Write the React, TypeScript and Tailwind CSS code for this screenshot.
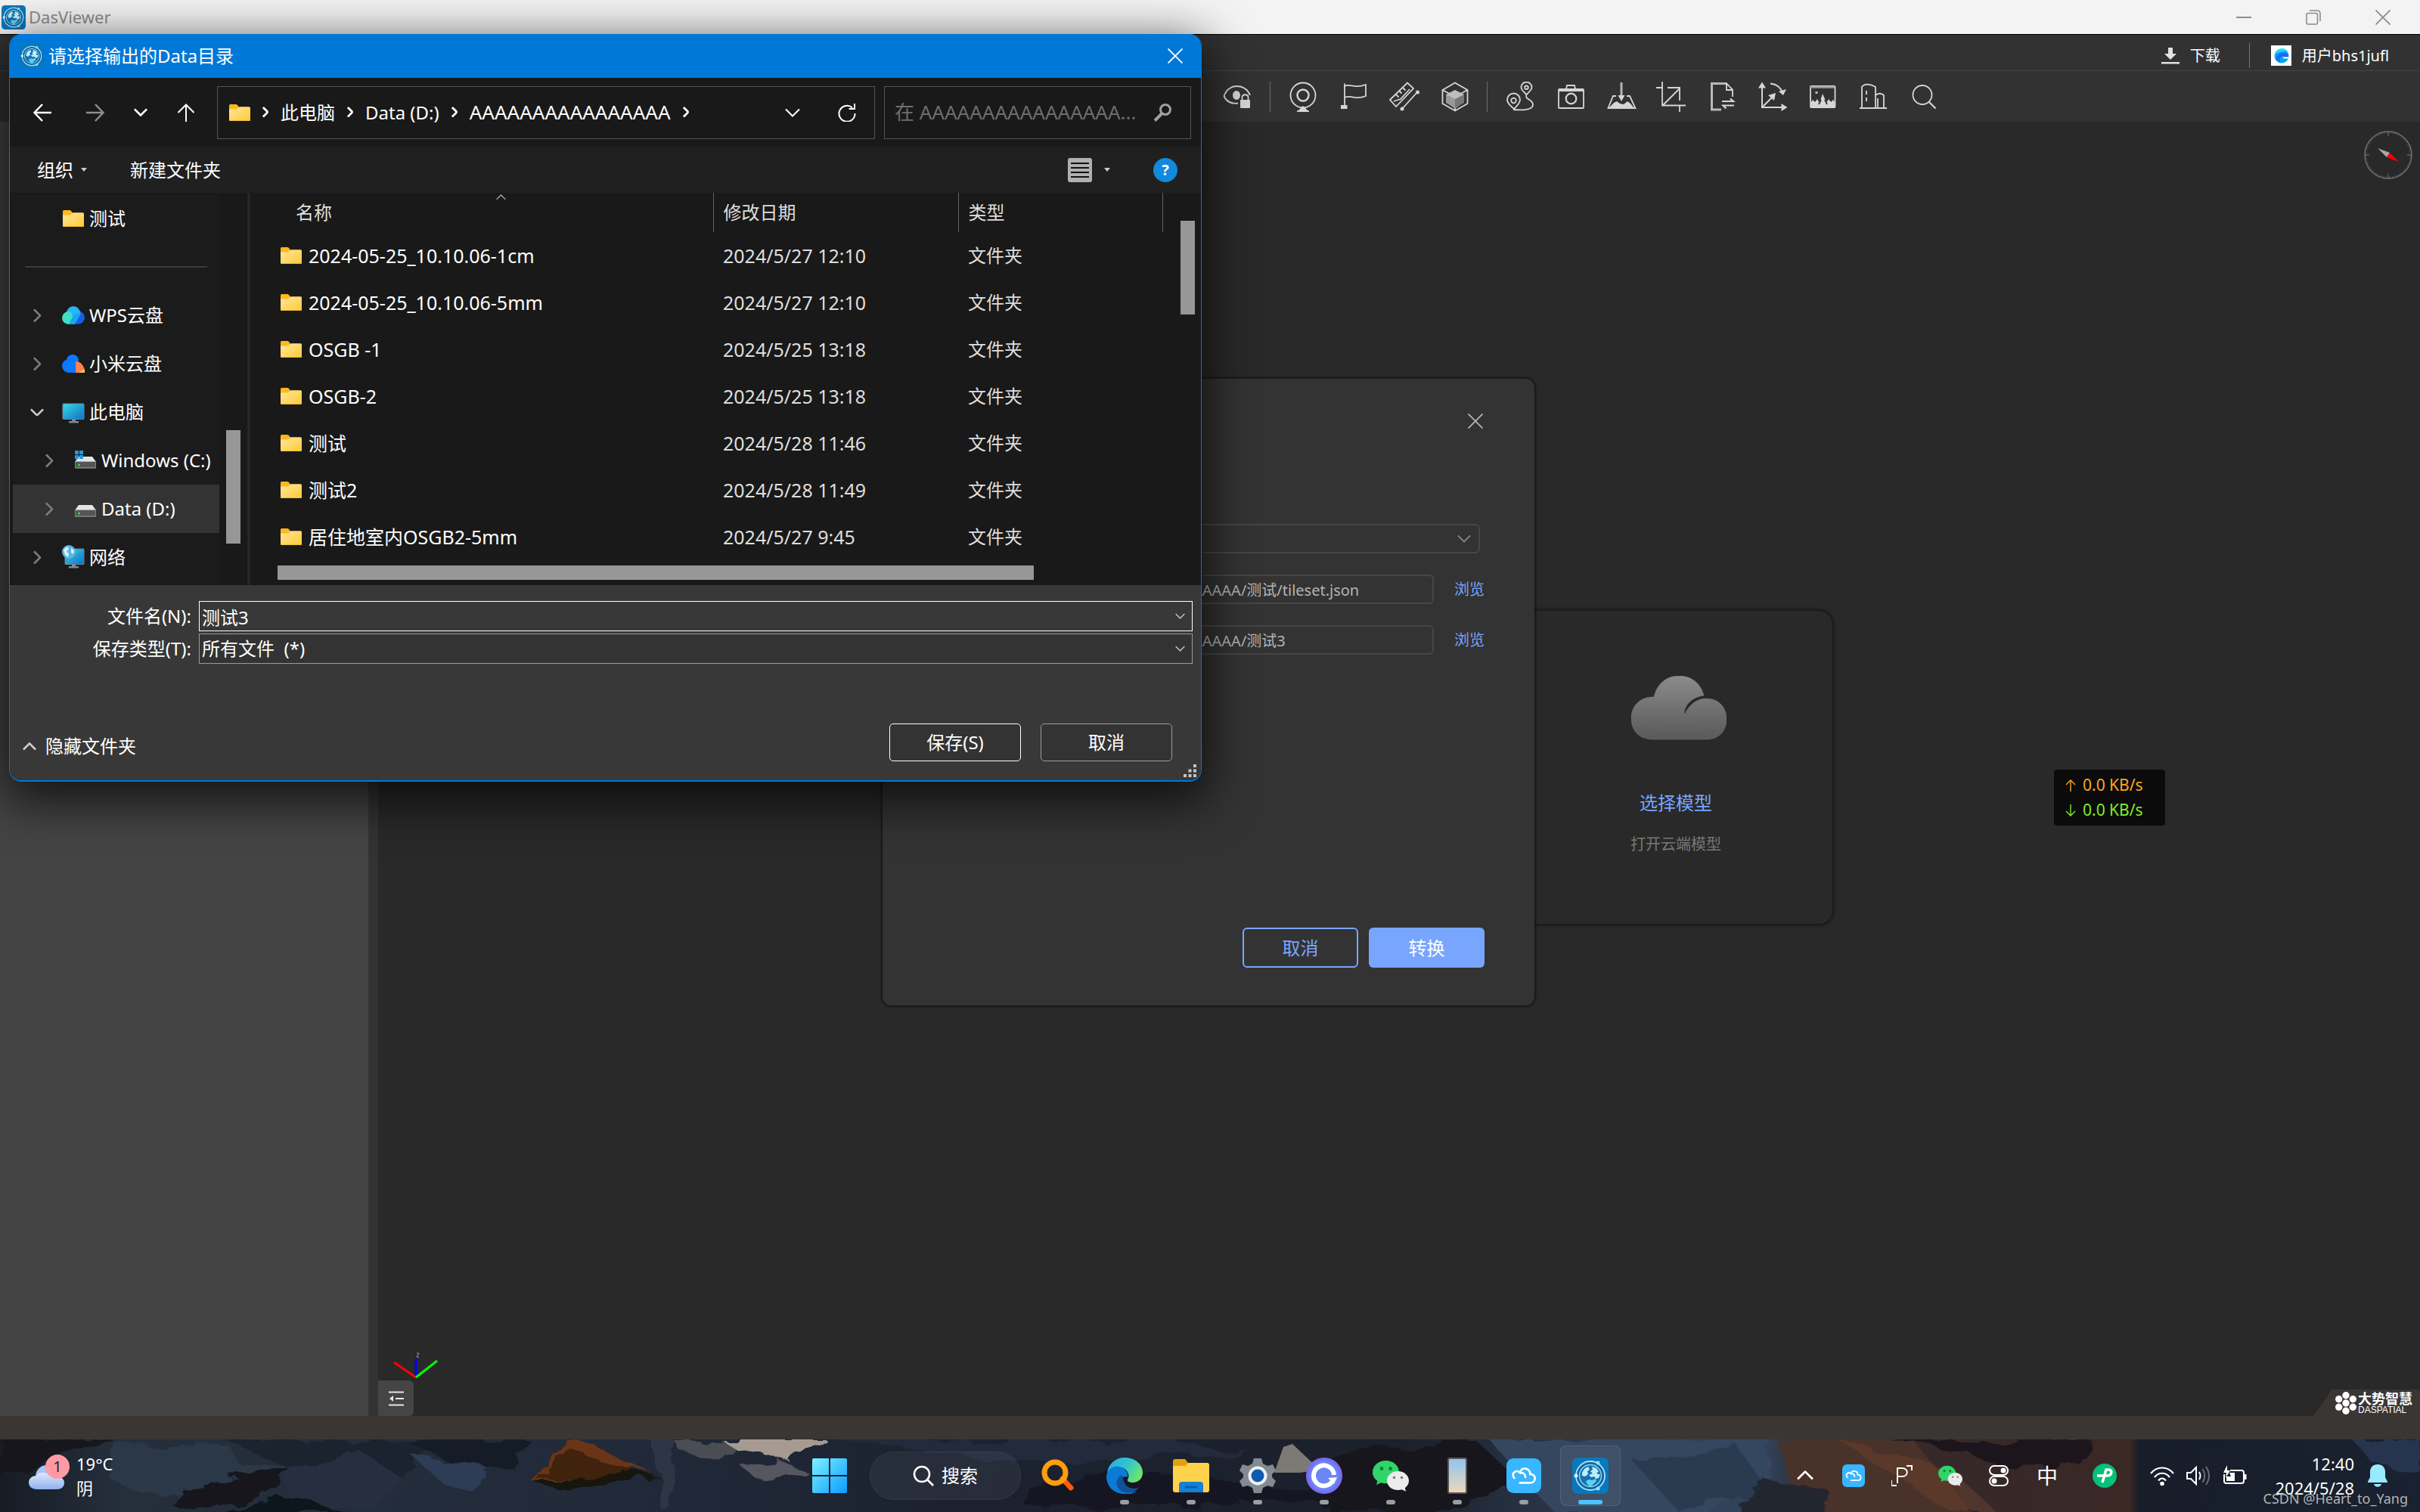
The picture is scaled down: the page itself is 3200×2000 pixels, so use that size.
import { FC, ReactNode } from "react"

type IconProps = { className?: string }

type TreeItem = {
    label: string
    icon: ReactNode
    level: number
    arrow?: "closed" | "open"
    selected?: boolean
}

const files = [
    { name: "2024-05-25_10.10.06-1cm", date: "2024/5/27 12:10" },
    { name: "2024-05-25_10.10.06-5mm", date: "2024/5/27 12:10" },
    { name: "OSGB -1", date: "2024/5/25 13:18" },
    { name: "OSGB-2", date: "2024/5/25 13:18" },
    { name: "测试", date: "2024/5/28 11:46" },
    { name: "测试2", date: "2024/5/28 11:49" },
    { name: "居住地室内OSGB2-5mm", date: "2024/5/27 9:45" },
]

/* ---------- shared icons ---------- */

const Chevron: FC<IconProps> = ({ className = "w-5" }) => (
    <svg viewBox="0 0 20 12" className={className} fill="none" stroke="currentColor" strokeWidth="2">
        <path d="M1 1.500 L10 10.500 L19 1.500" />
    </svg>
)

const Cross: FC<IconProps> = ({ className = "w-5" }) => (
    <svg viewBox="0 0 20 20" className={className} fill="none" stroke="currentColor" strokeWidth="1.800">
        <path d="M.5.5l19 19M19.500.5l-19 19" />
    </svg>
)

const Folder: FC<IconProps> = ({ className = "w-7" }) => (
    <svg viewBox="0 0 28 22" className={className}>
        <defs>
            <linearGradient id="folder" x1="0" y1="0" x2="1" y2="1">
                <stop offset="0" stopColor="#ffe79c" />
                <stop offset="1" stopColor="#ffc937" />
            </linearGradient>
        </defs>
        <path d="M0 1.500Q0 0 1.500 0h7.500q1 0 1.700.8L13 3.500 10 8H0z" fill="#ffb81c" />
        <path d="M0 6.500h9q1.200 0 2-1l1.500-1.500q.8-.7 1.800-.7H26.500Q28 3.300 28 4.800V20.500q0 1.500-1.500 1.500h-25Q0 22 0 20.500z" fill="url(#folder)" />
        <path d="M0 20.500q0 1.500 1.500 1.500h25q1.500 0 1.500-1.500" fill="none" stroke="#e8a820" />
    </svg>
)

const DasLogo: FC<IconProps> = ({ className = "w-8" }) => (
    <svg viewBox="0 0 48 48" className={className}>
        <rect width="48" height="48" rx="7" fill="#0878bd" />
        <circle cx="24" cy="24" r="19" fill="#1263a0" stroke="#a9e4f7" strokeWidth="1.800" />
        <circle cx="24" cy="24" r="14.500" fill="#1672b5" stroke="#8bd6f0" strokeWidth="1.500" />
        <path d="M13 20l3-5 5-3 2 4-3 2 1 4-4 3-4-1zM26 12l6 2 3 5-3 1 2 2h3l-2 5-4 1-2-3-4 1-3-3 5-2-3-3 3-2z" fill="#bdeffa" />
        <path d="M18 31l4-2 4 1 5-2 1 3-4 4-4 4-5-5z" fill="#5fd0ee" />
        <circle cx="5" cy="24" r="2.500" fill="#d6f7ff" />
        <circle cx="34" cy="7" r="2.500" fill="#8fe5ee" />
        <circle cx="34" cy="41" r="2.500" fill="#8fe5ee" />
    </svg>
)

const WeChat: FC<IconProps> = ({ className = "w-12" }) => (
    <svg viewBox="0 0 48 48" className={className}>
        <path d="M17.500 4C7.800 4 0 10.800 0 19.200c0 4.800 2.500 9 6.400 11.700L5 36l6.200-2.800c2 .6 4.100 1 6.300 1C27.200 34.200 35 27.500 35 19.200S27.200 4 17.500 4z" fill="#2fd566" />
        <ellipse cx="12" cy="14.500" rx="2.300" ry="2.500" fill="#157a3c" />
        <ellipse cx="23.500" cy="14.500" rx="2.300" ry="2.500" fill="#157a3c" />
        <path d="M33.500 18C25.400 18 19 23.500 19 30.500S25.400 43 33.500 43c1.800 0 3.500-.3 5-.8l5.500 2.600-1.200-4.600c3.200-2.300 5.200-5.700 5.200-9.700C48 23.500 41.600 18 33.500 18z" fill="#ececec" />
        <circle cx="28.500" cy="26.500" r="1.800" fill="#7a7a7a" />
        <circle cx="38.500" cy="26.500" r="1.800" fill="#7a7a7a" />
    </svg>
)

const CloudApp: FC<IconProps> = ({ className = "w-11" }) => (
    <svg viewBox="0 0 44 44" className={className}>
        <rect width="44" height="44" rx="9" fill="#38b6ff" />
        <path d="M17 31h13c8 0 8-11 0-11 0-8-11-10-13-2-5-5-12 2-7 7m8-7c4 0 6 3 6 6" fill="none" stroke="#fff" strokeWidth="2.600" strokeLinecap="round" />
    </svg>
)

/* ---------- app toolbar icons, all on a 40 grid ---------- */

const Tool: FC<{ label: string; children: ReactNode }> = ({ label, children }) => (
    <button aria-label={label} className="flex h-10 items-center justify-center text-[#d6d6d6]">
        <svg viewBox="0 0 40 40" className="h-10 w-10" fill="none" stroke="currentColor" strokeWidth="1.800">
            {children}
        </svg>
    </button>
)

const EyeLock = () => (
    <Tool label="view lock">
        <path d="M21 28.500C12 30 5 25 2.500 19 6 10 13 6 20 6s14 4 17 12" />
        <path d="M2.500 19c2 6 7 9 12 10" />
        <ellipse cx="19" cy="18" rx="5" ry="6" fill="currentColor" stroke="none" />
        <rect x="24" y="24" width="13" height="11" rx="1" fill="currentColor" stroke="none" />
        <path d="M26.500 24v-3c0-5 8-5 8 0v3" />
    </Tool>
)

const viewTools = [
    <Tool key="cam" label="panorama">
        <circle cx="20" cy="18" r="16.500" />
        <circle cx="20" cy="18" r="7.500" strokeWidth="2.400" />
        <path d="M20 32l7 7H13z" fill="currentColor" stroke="none" />
        <path d="M12 39.200h16" />
    </Tool>,
    <Tool key="flag" label="mark">
        <path d="M8 2.500v32M8 6c8-4 12 4 28-2v15c-14 6-18-2-28 2" />
        <rect x="3" y="31" width="8.500" height="5" fill="currentColor" stroke="none" />
    </Tool>,
    <Tool key="ruler" label="measure">
        <path d="M1 24L24 1.500 32 9 9 33z" />
        <path d="M9 17l3.500 3.500M13.500 12.500l3 3M18 8l3.500 3.500M6 26l9-3 12-13" />
        <path d="M17 36L37 14" />
        <circle cx="17" cy="36" r="2.500" fill="currentColor" stroke="none" />
        <circle cx="37.500" cy="14" r="2.500" fill="currentColor" stroke="none" />
    </Tool>,
    <Tool key="cube" label="clip box">
        <path d="M20 1.500L36.500 11v18L20 38.500 3.500 29V11z" />
        <path d="M3.500 11L20 20l16.500-9M20 20v18" />
        <path d="M8 17l12-6 12 6v9l-12 10L8 26z" fill="#bdbdbd" stroke="none" />
        <path d="M20 23v12l12-7V17z" fill="#777" stroke="none" />
        <path d="M8 17l12 6v12L8 28z" fill="#999" stroke="none" />
    </Tool>,
]

const dataTools = [
    <Tool key="route" label="route">
        <path d="M12 36c-5-4-9-7.500-9-12a8.500 8.500 0 0 1 17 0c0 4.500-4 8-8 12z" />
        <circle cx="11.500" cy="25" r="3.300" />
        <path d="M28.500 17c-4-4-7-6-7-9.500a7 7 0 0 1 14 0c0 3.500-3 5.500-7 9.500z" />
        <circle cx="28.500" cy="7.800" r="2.300" />
        <path d="M28.500 17c-3 7 8.500 6 8.500 13.500C37 38 22 38 11 37" />
    </Tool>,
    <Tool key="shot" label="screenshot">
        <rect x="4" y="10" width="33" height="25" rx="1" />
        <path d="M4 12h33" />
        <path d="M14 10l1-5h10l1 5" />
        <circle cx="20.500" cy="22.500" r="6.800" strokeWidth="2.200" />
    </Tool>,
    <Tool key="import" label="import">
        <path d="M20 1v19" strokeWidth="3" stroke="#b5b5b5" />
        <path d="M15.500 18h9L20 26z" fill="currentColor" stroke="none" />
        <path d="M13 19H9L2.500 35h36L31 19h-4" />
        <path d="M4 34l6-6 4-2 4 3 5 1 5-4 4 3 4 5z" fill="currentColor" stroke="none" />
    </Tool>,
    <Tool key="crop" label="crop">
        <path d="M8 0v31.500h31M0 8h8M15 8h16v17M31 32v8M9 31L31 9" />
    </Tool>,
    <Tool key="file" label="convert">
        <path d="M19 37H6.500V2.500H26" stroke="#b9b9b9" strokeWidth="3" />
        <path d="M25 1.500l9 9V20M26 3v8h7" />
        <path d="M20 26h15l-4-3.500M36 31.500H21.500l4 4" strokeWidth="2.200" />
    </Tool>,
    <Tool key="axes" label="transform">
        <path d="M6 6v28h28M6 34l14-14M17 2.500c9 1 14 6 16 12" strokeWidth="2" />
        <path d="M6 .5l5 8H1zM39.500 34l-8 5v-10zM24 15l-2 10-8-7zM34 18l-6-5 10-3z" fill="currentColor" stroke="none" />
    </Tool>,
    <Tool key="image" label="image">
        <rect x="4" y="6" width="32.500" height="28" rx="1" />
        <path d="M4 7.500h32" stroke="#999" strokeWidth="2.500" />
        <path d="M5 27l2-3 3 3 3-4 2 4 2-2 3-9 4 9 2 2 2-4 3 4 3-3 2 3v7H5z" fill="currentColor" stroke="none" />
        <path d="M15 30l3-6M26 30l-3-6" stroke="#333" />
        <path d="M10.500 14.500h3" strokeWidth="2.500" />
    </Tool>,
    <Tool key="building" label="building">
        <path d="M2 35h36M5 35V7c3-5 12-4 18 0v28M23 18c3-3 8-3 11 0v17M26 22v13" />
        <path d="M11 12v5M11 21v5" />
    </Tool>,
    <Tool key="search" label="search">
        <circle cx="18" cy="17.500" r="12.500" />
        <path d="M27 27l8.500 8.500" strokeWidth="2.200" />
    </Tool>,
]

/* ---------- tree icons ---------- */

const Drive: FC<{ system?: boolean }> = ({ system }) => (
    <svg viewBox="0 0 28 28" className="w-7">
        <path d="M5 9h18l5 7H0z" fill="#e4e4e8" />
        <rect y="15.500" width="28" height="8.500" rx="1" fill="#555" stroke="#aaa" strokeWidth="1" />
        <circle cx="5.500" cy="20" r="1.500" fill="#3be03b" />
        {system && <path d="M0 1h5v5H0zM6 1h5v5H6zM0 7h5v5H0zM6 7h5v5H6z" fill="#1f9be6" />}
    </svg>
)

const Monitor: FC<{ globe?: boolean }> = ({ globe }) => (
    <svg viewBox="0 0 30 32" className="-mx-px w-[30px]">
        <defs>
            <linearGradient id="screen" x1="0" y1="0" x2="1" y2="1">
                <stop offset="0" stopColor="#38dbe6" />
                <stop offset="1" stopColor="#0f6fc4" />
            </linearGradient>
        </defs>
        <path d="M13 25h5v3h4v2.500H9V28h4z" fill="#7b8894" />
        <rect x={globe ? 4 : 1} y="5" width={globe ? 25 : 28} height="20.500" rx="1" fill="url(#screen)" stroke="#6c8796" strokeWidth="1" />
        {globe && <circle cx="9" cy="9" r="9" fill="#5cb6df" />}
        {globe && <path d="M2 6l5-4 2 3-3 4 3 2-1 5-4-3zM12 4l4 3-1 5-3-2z" fill="#d9f1f8" />}
    </svg>
)

const WpsCloud = () => (
    <svg viewBox="0 0 30 24" className="-mx-px w-[30px]">
        <circle cx="21" cy="15" r="9" fill="#1560e0" />
        <circle cx="15" cy="9" r="9" fill="#29b3f8" />
        <path d="M9 7a9 8.500 0 0 0 0 17h8L12 8z" fill="#3fe0c4" />
        <path d="M9 24h8l8-14c-5-2-9 0-12 6z" fill="#19a5f0" />
    </svg>
)

const MiCloud = () => (
    <svg viewBox="0 0 30 24" className="-mx-px w-[30px]">
        <circle cx="14" cy="8" r="8" fill="#0a78ff" />
        <circle cx="9" cy="15" r="9" fill="#0a78ff" />
        <rect x="8" y="10" width="10" height="14" fill="#0a78ff" />
        <path d="M18 9c7 0 12 6 12 15H18z" fill="#ff8050" />
        <path d="M22 24l8-5v5z" fill="#ffc64d" />
    </svg>
)

const tree: TreeItem[] = [
    { label: "WPS云盘", icon: <WpsCloud />, level: 0, arrow: "closed" },
    { label: "小米云盘", icon: <MiCloud />, level: 0, arrow: "closed" },
    { label: "此电脑", icon: <Monitor />, level: 0, arrow: "open" },
    { label: "Windows (C:)", icon: <Drive system />, level: 1, arrow: "closed" },
    { label: "Data (D:)", icon: <Drive />, level: 1, arrow: "closed", selected: true },
    { label: "网络", icon: <Monitor globe />, level: 0, arrow: "closed" },
]

const TreeRow: FC<{ item: TreeItem }> = ({ item }) => (
    <li className={`flex h-16 items-center whitespace-nowrap ${item.level ? "pl-[42px]" : "pl-[26px]"} ${item.selected ? "bg-[#333]" : ""}`}>
        <span className="flex w-3 justify-center">
            {item.arrow === "closed" && <Chevron className="w-[18px] shrink-0 -rotate-90 stroke-3 text-[#7a7a7a]" />}
            {item.arrow === "open" && <Chevron className="w-[18px] shrink-0 stroke-3 text-[#c8c8c8]" />}
        </span>
        <span className="ml-7 flex w-7 justify-center">{item.icon}</span>
        <span className="ml-[7px]">{item.label}</span>
    </li>
)

const Crumb = () => <Chevron className="-mx-0.5 w-3.5 shrink-0 -rotate-90 stroke-4 text-white" />

/* ---------- save dialog ---------- */

const SaveDialog: FC = () => (
    <section className="absolute left-3 top-[45px] w-[1577px] overflow-hidden rounded-2xl border-x border-b-2 border-[#0078d7] bg-[#191919] text-2xl text-white shadow-[0_18px_64px_8px_rgba(0,0,0,0.7)]">
        <header className="flex h-[58px] items-center bg-[#0078d7] pl-[13px] pr-6">
            <DasLogo />
            <h2 className="ml-1.5">请选择输出的Data目录</h2>
            <button aria-label="关闭" className="ml-auto"><Cross /></button>
        </header>

        <div className="flex h-[91px] items-center pl-2 pr-[13px]">
            <button aria-label="back" className="flex w-[70px] justify-center">
                <svg viewBox="0 0 24 24" className="w-6" fill="none" stroke="currentColor" strokeWidth="2.500"><path d="M24 12H2M12 1L1.500 12 12 23" /></svg>
            </button>
            <button aria-label="forward" className="flex w-[70px] justify-center text-[#8e8e8e]">
                <svg viewBox="0 0 24 24" className="w-6" fill="none" stroke="currentColor" strokeWidth="2.500"><path d="M0 12h22M12 1l10.500 11L12 23" /></svg>
            </button>
            <button aria-label="recent" className="flex w-[50px] justify-center"><Chevron className="w-[18px] stroke-3" /></button>
            <button aria-label="up" className="flex w-[70px] justify-center">
                <svg viewBox="0 0 24 24" className="w-6" fill="none" stroke="currentColor" strokeWidth="2"><path d="M12 24V2M1.500 12L12 1.500 22.500 12" /></svg>
            </button>

            <div className="ml-1.5 flex h-[70px] flex-1 items-center gap-[15px] border border-[#535353] pl-[15px] pr-6">
                <Folder />
                <Crumb />
                <span>此电脑</span>
                <Crumb />
                <span>Data (D:)</span>
                <Crumb />
                <span className="text-[26px]">AAAAAAAAAAAAAAAA</span>
                <Crumb />
                <button aria-label="history" className="ml-auto mr-[35px]"><Chevron className="w-5" /></button>
                <button aria-label="refresh">
                    <svg viewBox="0 0 24 24" className="w-6" fill="none" stroke="currentColor" strokeWidth="2"><path d="M19 5.500A10.500 10.500 0 1 0 22.500 13M22 0v7h-7.500" /></svg>
                </button>
            </div>

            <div className="ml-3 flex h-[70px] w-[406px] items-center border border-[#535353] pl-[13px] pr-6">
                <input aria-label="搜索" placeholder="在 AAAAAAAAAAAAAAAA..." className="min-w-0 flex-1 bg-transparent text-[26px] outline-none placeholder:text-[#6f6f6f]" />
                <svg viewBox="0 0 24 24" className="w-6 text-[#a0a0a0]" fill="none" stroke="currentColor">
                    <circle cx="15" cy="8" r="6.500" strokeWidth="3" />
                    <path d="M10.500 13L1 22.500" strokeWidth="4" />
                </svg>
            </div>
        </div>

        <div className="flex h-[61px] items-center bg-[#202020] pl-9 pr-[31px]">
            <button className="flex items-center gap-2.5">
                组织
                <svg viewBox="0 0 8 5" className="w-2" fill="#ccc"><path d="M0 0h8L4 5z" /></svg>
            </button>
            <button className="ml-[57px]">新建文件夹</button>
            <button aria-label="view" className="ml-auto flex items-center gap-4">
                <svg viewBox="0 0 32 32" className="w-8">
                    <rect width="32" height="32" rx="3" fill="#b0b0b0" />
                    <path d="M4 7h24M4 13h24M4 19h24M4 25h24" stroke="#111" strokeWidth="2" />
                </svg>
                <svg viewBox="0 0 8 5" className="w-2" fill="#ccc"><path d="M0 0h8L4 5z" /></svg>
            </button>
            <button aria-label="帮助" className="ml-[57px] flex h-8 w-8 items-center justify-center rounded-full bg-[#1189dd] text-xl font-bold">?</button>
        </div>

        <div className="flex h-[519px]">
            <div className="flex w-[318px] shrink-0 border-r-4 border-[#262626] pl-1 pt-0.5">
                <ul className="w-[273px] bg-[#1b1b1b]">
                    <li className="flex h-16 items-center pl-[66px]">
                        <Folder />
                        <span className="ml-[7px]">测试</span>
                    </li>
                    <li className="flex h-16 items-center px-4"><hr className="w-full border-t-2 border-[#3a3a3a]" /></li>
                    {tree.map((item) => <TreeRow key={item.label} item={item} />)}
                </ul>
                <div className="flex flex-1 items-end justify-center pb-[55px]">
                    <div className="h-[150px] w-[19px] bg-[#979797]" />
                </div>
            </div>

            <div className="relative min-w-0 flex-1 overflow-hidden">
                <table className="w-[1220px] table-fixed border-collapse text-left">
                    <colgroup>
                        <col className="w-[612px]" />
                        <col className="w-[324px]" />
                        <col className="w-[270px]" />
                        <col />
                    </colgroup>
                    <thead>
                        <tr className="h-[52px] text-[#dedede]">
                            <th className="relative border-r border-[#636363] pl-[60px] font-normal">
                                名称
                                <Chevron className="absolute left-[325px] top-0.5 w-[13px] rotate-180 text-[#aaa]" />
                            </th>
                            <th className="border-r border-[#636363] pl-[13px] font-normal">修改日期</th>
                            <th className="border-r border-[#636363] pl-[13px] font-normal">类型</th>
                            <th />
                        </tr>
                    </thead>
                    <tbody>
                        {files.map((file) => (
                            <tr key={file.name} className="h-[62px] whitespace-nowrap">
                                <td className="pl-10">
                                    <div className="flex items-center gap-[9px] text-[25px] leading-9">
                                        <Folder />
                                        {file.name}
                                    </div>
                                </td>
                                <td className="pl-[13px] text-[25px] leading-9 text-[#dedede]">{file.date}</td>
                                <td className="pl-[13px] text-[#dedede]">文件夹</td>
                                <td />
                            </tr>
                        ))}
                    </tbody>
                </table>
                <div className="absolute bottom-[7px] left-9 h-[19px] w-[1000px] bg-[#979797]" />
                <div className="absolute right-2 top-[37px] h-[124px] w-[19px] bg-[#979797]" />
            </div>
        </div>

        <div className="relative bg-[#383838] pb-[25px] pl-[17px] pr-[38px] pt-[21px]">
            <div className="-mr-[27px] grid grid-cols-[223px_1fr] items-center gap-x-2.5 gap-y-[3px]">
                <label htmlFor="filename" className="text-right">文件名(N):</label>
                <div className="relative flex items-center">
                    <input id="filename" defaultValue="测试3" className="h-10 w-full border border-white bg-transparent px-[3px] outline-none" />
                    <Chevron className="absolute right-2.5 w-[13px] text-[#ccc]" />
                </div>
                <label htmlFor="filetype" className="text-right">保存类型(T):</label>
                <div className="relative flex items-center">
                    <select id="filetype" className="h-10 w-full appearance-none border border-[#9b9b9b] bg-[#333] px-[3px] outline-none">
                        <option>所有文件&nbsp; (*)</option>
                    </select>
                    <Chevron className="absolute right-2.5 w-[13px] text-[#ccc]" />
                </div>
            </div>
            <div className="mt-[79px] flex items-start">
                <button className="mt-3.5 flex items-center gap-3">
                    <Chevron className="w-[18px] rotate-180 stroke-3 text-[#ccc]" />
                    隐藏文件夹
                </button>
                <button className="ml-auto h-[50px] w-[174px] rounded-[5px] border border-white bg-[#333]">保存(S)</button>
                <button className="ml-[26px] h-[50px] w-[174px] rounded-[5px] border border-[#9b9b9b] bg-[#333]">取消</button>
            </div>
            <svg viewBox="0 0 17 17" className="absolute bottom-1 right-1.5 w-[17px]" fill="#c4c4c4">
                <path d="M13 0h4v4h-4zM6.500 6.500h4v4h-4zM13 6.500h4v4h-4zM0 13h4v4H0zM6.500 13h4v4h-4zM13 13h4v4h-4z" />
            </svg>
        </div>
    </section>
)

/* ---------- conversion modal behind the dialog ---------- */

const ConvertModal: FC = () => (
    <section className="absolute right-[1171px] top-[501px] flex h-[829px] w-[862px] flex-col rounded-xl bg-[#333] px-[66px] pb-[50px] pt-[46px] text-xl text-[#b4b4b4] shadow-[0_0_3px_2px_rgba(0,0,0,0.45)]">
        <button aria-label="关闭" className="ml-auto mr-0.5"><Cross /></button>
        <div className="mt-[126px] flex flex-col gap-7">
            <div className="relative mr-1.5 flex items-center pl-[164px]">
                <select aria-label="转换类型" className="h-[39px] w-full appearance-none rounded-md border-2 border-[#474747] bg-transparent" />
                <Chevron className="absolute right-3 w-[18px] text-[#888]" />
            </div>
            <div className="flex items-center pl-[164px]">
                <input aria-label="输入文件" defaultValue="D:/AAAAAAAAAAAAAAAA/测试/tileset.json" className="h-[39px] min-w-0 flex-1 rounded-md border-2 border-[#474747] bg-transparent px-2.5" />
                <button className="ml-[27px] text-[#78a6ff]">浏览</button>
            </div>
            <div className="flex items-center pl-[164px]">
                <input aria-label="输出目录" defaultValue="D:/AAAAAAAAAAAAAAAA/测试3" className="h-[39px] min-w-0 flex-1 rounded-md border-2 border-[#474747] bg-transparent px-2.5" />
                <button className="ml-[27px] text-[#78a6ff]">浏览</button>
            </div>
        </div>
        <div className="mt-auto flex justify-end gap-3.5 text-2xl">
            <button className="h-[53px] w-[153px] rounded-md border-2 border-[#78a6ff] text-[#78a6ff]">取消</button>
            <button className="h-[53px] w-[153px] rounded-md bg-[#78a6ff] text-white">转换</button>
        </div>
    </section>
)

const Compass = () => (
    <svg viewBox="0 0 64 64" className="absolute right-2.5 top-3 w-16">
        <circle cx="32" cy="32" r="31" fill="none" stroke="#6f6f6f" strokeWidth="1.500" />
        <circle cx="32" cy="32" r="29.500" fill="none" stroke="#5c5c5c" strokeWidth="2" strokeDasharray="1 2.090" />
        <path d="M32 1v6M32 57v6M1 32h6M57 32h6" stroke="#777" />
        <path d="M18 23l16 6-4 6z" fill="#a8a8a8" />
        <path d="M34 29l12 12-16-6z" fill="#f00" />
    </svg>
)

const CloudCard: FC = () => (
    <button className="flex h-[418px] w-[418px] flex-col items-center rounded-[20px] border-2 border-[#1b1b1b] pt-[86px] shadow-[0_0_4px_rgba(0,0,0,0.4)]">
        <svg viewBox="0 0 126 86" className="ml-2 w-[126px]">
            <defs>
                <linearGradient id="cloud" x1="0" y1="0" x2="0" y2="1">
                    <stop offset="0" stopColor="#8b8b8b" />
                    <stop offset="1" stopColor="#595959" />
                </linearGradient>
            </defs>
            <path d="M29 84C11 84 0 73 0 56 0 39 13 27 30 28 34 11 46 0 63 0c17 0 29 10 33 26-14 2-24 10-26 22l1 3c5-13 16-21 28-21 16 0 27 11 27 27 0 17-11 27-27 27z" fill="url(#cloud)" stroke="#8a8a8a" strokeOpacity=".4" />
        </svg>
        <span className="mt-[66px] text-2xl text-[#78a6ff]">选择模型</span>
        <span className="mt-[25px] text-xl text-[#787878]">打开云端模型</span>
    </button>
)

const Brand: FC = () => (
    <div className="absolute bottom-0 right-0 flex h-[35px] items-center bg-[#3a3634] pl-[29px] pr-2.5 text-white [clip-path:polygon(24px_0,100%_0,100%_100%,0_100%,18px_10px)]">
        <svg viewBox="0 0 28 30" className="w-7" fill="#fff">
            <circle cx="14" cy="15" r="4.700" /><circle cx="14" cy="4.700" r="4.700" /><circle cx="14" cy="25.300" r="4.700" />
            <circle cx="4.700" cy="9.700" r="4.700" /><circle cx="23.300" cy="9.700" r="4.700" />
            <circle cx="4.700" cy="20.300" r="4.700" /><circle cx="23.300" cy="20.300" r="4.700" />
        </svg>
        <div className="ml-0.5 leading-none">
            <div className="text-[18px] font-bold leading-[18px]">大势智慧</div>
            <div className="font-['Liberation_Sans'] text-[12px] leading-[12px]">DASPATIAL</div>
        </div>
    </div>
)

/* ---------- taskbar ---------- */

const Wallpaper = () => (
    <svg viewBox="0 0 3200 96" preserveAspectRatio="xMidYMid slice" className="absolute inset-0 h-full w-full">
        <defs>
            <linearGradient id="wall" x1="0" x2="1">
                <stop offset="0" stopColor="#171b24" />
                <stop offset=".05" stopColor="#252f3b" />
                <stop offset=".25" stopColor="#222a3a" />
                <stop offset=".38" stopColor="#1c2230" />
                <stop offset=".58" stopColor="#1b202b" />
                <stop offset=".68" stopColor="#33425a" />
                <stop offset=".73" stopColor="#30425a" />
                <stop offset=".75" stopColor="#33292a" />
                <stop offset=".88" stopColor="#3a2825" />
                <stop offset=".884" stopColor="#171d29" />
                <stop offset="1" stopColor="#1a2130" />
            </linearGradient>
            {/* rough brush texture over the flat shapes */}
            <filter id="brush" x="0" y="0" width="1" height="1">
                <feTurbulence type="fractalNoise" baseFrequency=".018 .03" numOctaves="4" seed="7" result="noise" />
                <feDisplacementMap in="SourceGraphic" in2="noise" scale="26" />
            </filter>
        </defs>
        <rect width="3200" height="96" fill="url(#wall)" />
        <g filter="url(#brush)">
            <path d="M0 0h150L60 30 0 52z" fill="#14151b" />
            <path d="M150 4l150 0 20 32 65 0-90 32-100 8-50-24z" fill="#2b3946" />
            <path d="M300 0h280l-60 60-80-18-60-4z" fill="#1a202d" />
            <path d="M380 40l90-30 60 40-30 46-120-20z" fill="#252d40" />
            <path d="M240 66l145-26-20 24-50 20-85 6z" fill="#12161c" />
            <path d="M545 22l95 12-12 36-40-10z" fill="#2e3e54" />
            <path d="M540 4l60-4h100l-20 40-90-14z" fill="#161b26" />
            <path d="M700 52l60-44 26 0 74 34-20-4-120 14z" fill="#6b3518" />
            <path d="M706 50l54-32 80 24-30 4z" fill="#41210f" />
            <path d="M702 54l120-12 46 2-70 18-60 2z" fill="#191311" />
            <path d="M295 96l70-24 50 10 40 14z" fill="#0f141c" />
            <path d="M890 0h80l10 12-30 14-50-10z" fill="#4b4d55" />
            <path d="M955 0h138l-22 16-24 16-30-10-40-6z" fill="#a69b92" />
            <path d="M980 36l50-8 40 16-70 8z" fill="#55565f" />
            <path d="M860 0h30v96h-12z" fill="#2d3644" />
            <path d="M1360 62l200-20 260 40-460 10z" fill="#131722" />
            <path d="M1100 0h440l120 20-300 10z" fill="#222b3a" />
            <path d="M1750 20l180-20h20l54 50-90 46h-160z" fill="#14161c" />
            <path d="M1970 0h370v50l-80 50h-200l-40-40z" fill="#36475f" />
            <path d="M2160 30l140-20 40 60-120 26z" fill="#2b3a50" />
            <path d="M2350 0l180 0 80 100-200 0-40-40z" fill="#4a3029" />
            <path d="M2430 0l150 40 60 56h-60z" fill="#6a4230" opacity=".5" />
            <path d="M2500 0h270c-30 50-120 50-170 14z" fill="#1d191c" />
            <path d="M2330 50l90 20-10 30h-120z" fill="#24262d" />
            <path d="M3110 0h90v44l-60-10z" fill="#26344d" />
        </g>
        <path d="M1685 44l12-34 12-4 36 34-26 4z" fill="#7d7974" />
    </svg>
)

const TaskIcon: FC<{ children: ReactNode; label: string; state?: "open" | "active" }> = ({ children, label, state }) => (
    <button aria-label={label} className="relative flex h-24 w-[88px] items-center justify-center">
        {state === "active" && <span className="absolute h-20 w-20 rounded-lg border border-white/10 bg-white/5" />}
        <span className="relative">{children}</span>
        {state === "open" && <span className="absolute bottom-2.5 h-1.5 w-3 rounded-full bg-[#9b9da3]" />}
        {state === "active" && <span className="absolute bottom-2.5 h-1.5 w-8 rounded-full bg-[#4cc2ff]" />}
    </button>
)

const Taskbar: FC = () => (
    <footer className="relative grid h-24 shrink-0 grid-cols-[1fr_auto_1fr] overflow-hidden text-white">
        <Wallpaper />

        <button className="relative flex items-center pl-[38px] text-left text-[22px]">
            <svg viewBox="0 0 54 48" className="-mt-2 w-[54px]">
                <defs>
                    <linearGradient id="weather" x1="0" y1="0" x2="0" y2="1">
                        <stop offset="0" stopColor="#dfe8fb" />
                        <stop offset="1" stopColor="#8fb2f2" />
                    </linearGradient>
                </defs>
                <circle cx="24" cy="29" r="15" fill="#a9c2f5" />
                <path d="M11 46C4 46 0 42 0 37s4-9 10-9c3-5 13-6 17 0 8-2 20 1 20 9 0 6-4 9-10 9z" fill="url(#weather)" />
                <circle cx="38" cy="16" r="16" fill="#ff99a4" />
                <text x="38" y="23" textAnchor="middle" fontSize="20" fill="#222">1</text>
            </svg>
            <span className="ml-[9px] leading-8">19°C<br />阴</span>
        </button>

        <div className="relative flex items-center">
            <TaskIcon label="开始">
                <svg viewBox="0 0 46 46" className="w-[46px]">
                    <defs>
                        <linearGradient id="win" x1="0" y1="0" x2="1" y2="1">
                            <stop offset="0" stopColor="#7df2ff" />
                            <stop offset="1" stopColor="#0b9bff" />
                        </linearGradient>
                    </defs>
                    <path d="M2 0h20v22H0V2q0-2 2-2zM24 0h20q2 0 2 2v20H24zM0 24h22v22H2q-2 0-2-2zM24 24h22v20q0 2-2 2H24z" fill="url(#win)" />
                </svg>
            </TaskIcon>
            <button className="ml-[9px] mr-[5px] flex h-16 w-[200px] items-center justify-center gap-2.5 rounded-full border border-white/5 bg-white/5 text-2xl">
                <svg viewBox="0 0 28 28" className="w-7" fill="none" stroke="#fff" strokeWidth="2.600">
                    <circle cx="12" cy="12" r="10" /><path d="M19 19l8 8" />
                </svg>
                搜索
            </button>
            <TaskIcon label="Everything">
                <svg viewBox="0 0 44 44" className="w-11">
                    <path d="M28 26L39 38" stroke="#ff5a12" strokeWidth="7" strokeLinecap="round" />
                    <circle cx="18" cy="18" r="14" fill="none" stroke="#ff9d0a" strokeWidth="7" />
                </svg>
            </TaskIcon>
            <TaskIcon label="Edge" state="open">
                <svg viewBox="0 0 48 48" className="w-12">
                    <defs>
                        <linearGradient id="edgeTop" x1="0" y1="0" x2="1" y2=".5">
                            <stop offset="0" stopColor="#22a8e0" />
                            <stop offset=".6" stopColor="#36c6cf" />
                            <stop offset="1" stopColor="#6be36c" />
                        </linearGradient>
                    </defs>
                    <path d="M1 20C3 8 12 0 24 0c14 0 24 9 24 20 0 8-6 13-13 13-5 0-8-2-7-4 3-3 2-14-9-16C11 12 4 16 1 20z" fill="url(#edgeTop)" />
                    <path d="M0 25c1-10 9-14 16-13 9 1 13 8 12 14-7-3-12 5-7 13 4 6 12 8 19 5-5 4-11 5-16 4C10 48 0 38 0 25z" fill="#0b7bd8" />
                    <path d="M20 23c-6 3-9 12-4 18 6 8 18 8 28-2-8 4-17 1-20-5-2-4-2-9-4-11z" fill="#11519c" />
                </svg>
            </TaskIcon>
            <TaskIcon label="文件资源管理器" state="open">
                <svg viewBox="0 0 48 44" className="w-12">
                    <path d="M0 3q0-3 3-3h13l4 5v6H0z" fill="#e2a10f" />
                    <path d="M0 9h17l3-4h25q3 0 3 3v33q0 3-3 3H3q-3 0-3-3z" fill="#ffd24b" />
                    <path d="M8 44V34q0-4 4-4h24q4 0 4 4v10z" fill="#1380d4" />
                    <path d="M16 37h16" stroke="#0a5ba8" strokeWidth="2.500" />
                </svg>
            </TaskIcon>
            <TaskIcon label="设置" state="open">
                <svg viewBox="0 0 48 48" className="w-12">
                    <path d="M19 1h10l2 7 6 3 7-2 4 8-5 5v4l5 5-4 8-7-2-6 3-2 7H19l-2-7-6-3-7 2-4-8 5-5v-4l-5-5 4-8 7 2 6-3z" fill="#838b92" />
                    <circle cx="24" cy="24" r="10.500" fill="#0f5cad" stroke="#eef1f4" strokeWidth="4" />
                </svg>
            </TaskIcon>
            <TaskIcon label="浏览器" state="open">
                <svg viewBox="0 0 48 48" className="w-12">
                    <circle cx="24" cy="24" r="24" fill="#7c6cf0" />
                    <circle cx="24" cy="24" r="20" fill="#6a86f5" />
                    <path d="M35 31a13.500 13.500 0 1 1 2-8" fill="none" stroke="#fff" strokeWidth="6" />
                    <path d="M29 27l12-1-4 9z" fill="#fff" />
                </svg>
            </TaskIcon>
            <TaskIcon label="微信" state="open"><WeChat /></TaskIcon>
            <TaskIcon label="手机" state="open">
                <svg viewBox="0 0 26 48" className="w-[26px]">
                    <defs>
                        <linearGradient id="phone" x1="0" y1="0" x2="0" y2="1">
                            <stop offset="0" stopColor="#8fc3f2" />
                            <stop offset="1" stopColor="#efd9b8" />
                        </linearGradient>
                    </defs>
                    <rect x="1" y="1" width="24" height="46" rx="2" fill="url(#phone)" stroke="#5c5753" strokeWidth="2" />
                </svg>
            </TaskIcon>
            <TaskIcon label="云盘" state="open"><CloudApp className="w-[46px]" /></TaskIcon>
            <TaskIcon label="DasViewer" state="active"><DasLogo className="w-12" /></TaskIcon>
        </div>

        <div className="relative flex items-center justify-end pr-[43px]">
            <button aria-label="more" className="flex w-16 justify-center"><Chevron className="w-[22px] rotate-180 stroke-[2.500]" /></button>
            <button aria-label="cloud" className="flex w-16 justify-center"><CloudApp className="w-[30px]" /></button>
            <button aria-label="project" className="flex w-16 justify-center">
                <svg viewBox="0 0 28 28" className="w-7" fill="none" stroke="#fff" strokeWidth="2">
                    <path d="M8 24V4h6c9 0 9 11 0 11H8M20 1h7v6M0 20v7h7" />
                </svg>
            </button>
            <button aria-label="微信" className="flex w-16 justify-center"><WeChat className="w-8" /></button>
            <button aria-label="switches" className="flex w-16 justify-center">
                <svg viewBox="0 0 26 28" className="w-[26px]" fill="none" stroke="#fff" strokeWidth="2">
                    <rect x="1" y="1" width="24" height="12" rx="6" /><rect x="1" y="15" width="24" height="12" rx="6" />
                    <circle cx="19" cy="7" r="2.500" fill="#fff" /><circle cx="7" cy="21" r="2.500" fill="#fff" />
                </svg>
            </button>
            <button className="flex w-16 justify-center text-[28px]">中</button>
            <button aria-label="plus" className="ml-3 flex w-16 justify-center">
                <svg viewBox="0 0 32 32" className="w-8">
                    <circle cx="16" cy="16" r="16" fill="#06c07a" />
                    <path d="M13 25L18 8h4c5 1 3 8-2 8H6" fill="none" stroke="#fff" strokeWidth="3.500" />
                </svg>
            </button>
            <button aria-label="network" className="ml-7 flex gap-4">
                <svg viewBox="0 0 32 28" className="w-8" fill="none" stroke="#fff" strokeWidth="2.200">
                    <path d="M1 11C9 1 23 1 31 11M6 16c5-7 15-7 20 0M11 20.500c3-4 7-4 10 0" />
                    <circle cx="16" cy="24.500" r="2.800" fill="#fff" stroke="none" />
                </svg>
                <svg viewBox="0 0 32 28" className="w-8" fill="none" stroke="#fff" strokeWidth="2">
                    <path d="M1 10h5l7-7v22l-7-7H1zM17 9q3 5 0 10" />
                    <path d="M21.500 5q5.500 9 0 18M26 2q8 12 0 24" stroke="#6a6d75" />
                </svg>
                <svg viewBox="0 0 32 28" className="w-8" fill="none" stroke="#fff" strokeWidth="2">
                    <path d="M10 7h15q3 0 3 3v11q0 3-3 3H5q-3 0-3-3V12" />
                    <path d="M30 12v7" strokeWidth="3" />
                    <path d="M9 10h7v11H5v-6h6zM6 0L1 10h4l-1 7 6-10H6z" fill="#fff" stroke="none" />
                </svg>
            </button>
            <button className="ml-8 w-[110px] text-right text-[22px] leading-8">12:40<br />2024/5/28</button>
            <svg viewBox="0 0 26 30" className="ml-[18px] w-[26px]" fill="#98ebff">
                <path d="M13 0C7 0 3 4 3 10v7l-3 6v1h26v-1l-3-6v-7c0-6-4-10-10-10zM8 26h10c-1 5-9 5-10 0z" />
            </svg>
        </div>
        <span className="absolute bottom-1 right-4 text-[18px] leading-7 text-[#b4b4b4]">CSDN @Heart_to_Yang</span>
    </footer>
)

const App: FC = () => (
    <div className="relative flex h-screen flex-col overflow-hidden bg-[#292929] font-['Noto_Sans','Noto_Sans_CJK_SC',sans-serif] leading-normal">
        <header className="flex h-[46px] shrink-0 items-center border-b border-black bg-[#f3f3f3] pl-0.5 pr-[39px] text-[#8c8c8c]">
            <DasLogo />
            <h1 className="ml-1 text-[22px]">DasViewer</h1>
            <div className="ml-auto flex items-center gap-[72px]">
                <button aria-label="最小化" className="h-0.5 w-5 bg-[#8c8c8c]" />
                <button aria-label="还原">
                    <svg viewBox="0 0 20 20" className="w-5" fill="none" stroke="currentColor" strokeWidth="1.600">
                        <rect x="1" y="4.500" width="14.500" height="14.500" rx="2" /><path d="M5 1h10q4 0 4 4v10" />
                    </svg>
                </button>
                <button aria-label="关闭"><Cross /></button>
            </div>
        </header>

        <div className="flex h-12 shrink-0 items-center justify-end border-b border-[#444] bg-[#323232] pr-[41px] pt-2 text-xl text-white">
            <button className="flex items-center gap-3.5">
                <svg viewBox="0 0 24 22" className="w-6" fill="#e2e2e2"><path d="M9 0h6v8h5l-8 8-8-8h5zM0 19h24v2.500H0z" /></svg>
                下载
            </button>
            <span className="ml-[38px] h-[33px] w-px bg-[#777]" />
            <button className="ml-7 flex items-center gap-3.5">
                <svg viewBox="0 0 27 27" className="w-[27px]">
                    <rect width="27" height="27" fill="#fff" />
                    <circle cx="14" cy="14" r="9.500" fill="#00a5f5" />
                    <path d="M5 12a9.500 9.500 0 0 1 17-4c-8-1-13 1-17 4z" fill="#22dcff" />
                    <path d="M7 19c0-8 8-12 16-7v3h-9c-3 1-3 4-2 7z" fill="#2067f5" />
                    <path d="M15 15.500h9v2h-7z" fill="#fff" />
                </svg>
                用户bhs1jufl
            </button>
        </div>

        <div className="flex h-[67px] shrink-0 items-center bg-[#323232] pl-[1616px]">
            <div className="w-10"><EyeLock /></div>
            <span className="ml-[23px] h-10 w-px bg-[#6e6e6e]" />
            <div className="ml-2.5 grid w-[267px] grid-cols-4">{viewTools}</div>
            <span className="ml-[9px] h-10 w-px bg-[#6e6e6e]" />
            <div className="ml-2.5 grid w-[600px] grid-cols-9">{dataTools}</div>
        </div>

        <div className="flex min-h-0 flex-1">
            <aside className="w-[500px] shrink-0 border-r-[13px] border-[#333] bg-[#444]" />
            <main className="relative flex flex-1 items-center justify-center pb-1 pl-[732px]">
                <CloudCard />
                <Compass />

                {/* network speed widget */}
                <div className="absolute right-[337px] top-[857px] w-[147px] rounded-sm bg-[#0b0b0b] py-1 pl-[15px] text-[21px] leading-[33px]">
                    {[{ color: "text-[#ffa51f]", flip: "" }, { color: "text-[#80ee28]", flip: "rotate-180" }].map((row) => (
                        <div key={row.color} className={`flex items-center gap-[9px] ${row.color}`}>
                            <svg viewBox="0 0 14 16" className={`w-3.5 ${row.flip}`} fill="none" stroke="currentColor" strokeWidth="1.400"><path d="M7 16V1M1 7l6-6 6 6" /></svg>
                            0.0 KB/s
                        </div>
                    ))}
                </div>

                {/* axis gizmo */}
                <svg viewBox="0 0 60 36" className="absolute bottom-12 left-5 w-[60px]" fill="none" strokeWidth="3">
                    <path d="M30 8v25" stroke="#00f" />
                    <path d="M1 13l29 20" stroke="#f00" />
                    <path d="M58 11L30 33" stroke="#0f0" />
                    <path d="M31 1h3l-3 5h3" stroke="#999" strokeWidth="1" />
                </svg>
                <button aria-label="展开" className="absolute bottom-0 left-0 flex h-[47px] w-[47px] items-center justify-center rounded-r-md bg-[#454545]">
                    <svg viewBox="0 0 20 20" className="w-5" fill="none" stroke="#e8e8e8" strokeWidth="2.200">
                        <path d="M0 1.500h20M9 10h11M0 18.500h20" /><path d="M6 6v8l-5-4z" fill="#e8e8e8" stroke="none" />
                    </svg>
                </button>
                <Brand />
            </main>
        </div>
        <div className="h-[31px] shrink-0 bg-[#3a3634]" />
        <Taskbar />

        <ConvertModal />
        <SaveDialog />
    </div>
)

export default App
